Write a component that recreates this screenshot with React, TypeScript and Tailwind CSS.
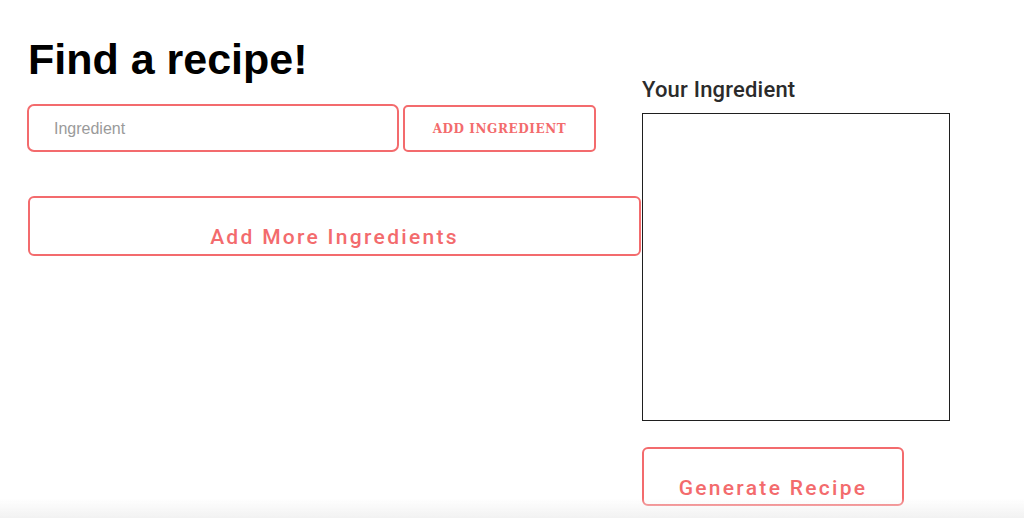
import React from "react";

const coral = "border-[#f36b6d] text-[#f36b6d]";

export default function App() {
  return (
    <div className="relative min-h-[518px] w-full bg-white font-['Roboto',sans-serif]">
      <div className="flex">
        {/* left column */}
        <div className="w-[642px] shrink-0 pl-[28px] pt-[38px]">
          <h1 className="font-['Liberation_Sans',Arial,sans-serif] text-[43px] font-bold leading-[42px] text-black">
            Find a recipe!
          </h1>
          <div className="mt-[24px] flex items-start gap-[4px]">
            <input
              type="text"
              placeholder="Ingredient"
              className={`h-[48px] w-[372px] -ml-px rounded-[7px] border-2 ${coral} bg-white pl-[25px] pt-[2px] font-['Liberation_Sans',Arial,sans-serif] text-[16px] text-[#333] placeholder:text-[#9a9a9a] outline-none`}
            />
            <button
              type="button"
              className={`mt-px h-[47px] w-[193px] rounded-[5px] border-2 ${coral} bg-white font-['DejaVu_Serif',serif] text-[12px] font-bold tracking-[0.6px]`}
            >
              ADD INGREDIENT
            </button>
          </div>
          <button
            type="button"
            className={`mt-[44px] flex h-[60px] w-[613px] justify-center rounded-[6px] border-2 ${coral} bg-white pt-[27px] text-[21px] font-medium leading-[25px] tracking-[2.3px]`}
          >
            Add More Ingredients
          </button>
        </div>

        {/* right column */}
        <div className="pt-[77px]">
          <h2 className="text-[22px] font-medium leading-[25px] tracking-[0.2px] text-[#2b2b2b]">Your Ingredient</h2>
          <div className="mt-[11px] h-[308px] w-[308px] border border-[#1f1f1f] bg-white" />
          <button
            type="button"
            className={`mt-[26px] flex h-[59px] w-[262px] justify-center rounded-[6px] border-2 ${coral} bg-white pt-[27px] text-[21px] font-medium leading-[25px] tracking-[2.3px]`}
          >
            Generate Recipe
          </button>
        </div>
      </div>

      {/* faint shade at the bottom edge */}
      <div className="pointer-events-none fixed bottom-0 left-0 right-0 h-[20px] bg-gradient-to-b from-white/0 to-[#f2f2f2]" />
    </div>
  );
}
